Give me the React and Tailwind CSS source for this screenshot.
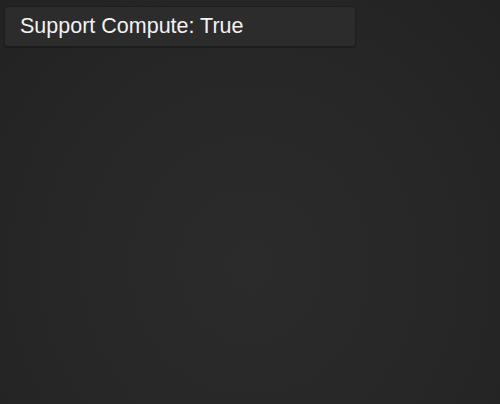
import React from 'react';

const App = () => {
  return (
    <div className="w-[500px] h-[404px] overflow-hidden bg-[radial-gradient(ellipse_at_50%_66%,#2b2b2b_0%,#272727_55%,#222222_100%)] font-['Liberation_Sans',Arial,sans-serif]">
      <div className="pt-[6px] pl-[4px]">
        <div className="w-[352px] h-[41px] flex items-center pl-[15px] rounded-[3px] bg-[#2c2c2c] border border-[#1e1e1e] shadow-[0_1px_1px_rgba(0,0,0,0.25)]">
          <span className="text-[21.5px] leading-none text-[#f2f2f2]">Support Compute: True</span>
        </div>
      </div>
    </div>
  );
};

export default App;
